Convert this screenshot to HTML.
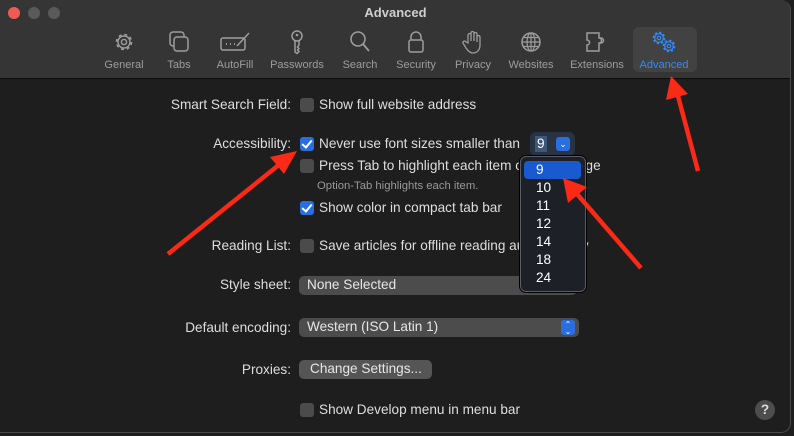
<!DOCTYPE html>
<html><head><meta charset="utf-8"><style>
*{margin:0;padding:0;box-sizing:border-box}
body{width:794px;height:436px;background:#1e1e1e;font-family:"Liberation Sans",sans-serif;color:#dedede;font-size:13.6px;position:relative;overflow:hidden}
.win{position:absolute;left:0;top:0;width:791px;height:433px;background:#1e1e1e;border:1px solid #4a4a4a;border-top:none;border-left:none;border-radius:0 10px 10px 0;overflow:hidden}
.tb{position:absolute;left:0;top:0;width:100%;height:79px;background:#353535;border-bottom:1px solid #0c0c0c}
.dot{position:absolute;top:7px;width:12px;height:12px;border-radius:50%;background:#5a5a5a}
.title{position:absolute;top:5px;left:0;width:791px;text-align:center;font-weight:bold;color:#cfcfcf;font-size:13px}
.it{position:absolute;top:29px;width:70px;margin-left:-35px;text-align:center;color:#9d9d9d;font-size:11px}
.it svg{display:block;margin:0 auto 4px;height:26px}
.sel{position:absolute;left:633px;top:27px;width:64px;height:45px;background:#424242;border-radius:6px}
.a{position:absolute;white-space:nowrap}
.lbl{position:absolute;right:499px;white-space:nowrap}
.cb{position:absolute;left:300px;width:14px;height:14px;border-radius:3px;background:#4b4b4b}
.cb.on{background:#2a6ee3}
.cb.on:after{content:"";position:absolute;left:4px;top:1px;width:4px;height:8px;border:solid #fff;border-width:0 2px 2px 0;transform:rotate(40deg)}
.pop{position:absolute;left:299px;height:19px;background:#4c4c4c;border-radius:5px;padding:1px 8px;color:#e6e6e6}
</style></head><body>
<div class="win">
<div class="tb">
<div class="dot" style="left:8px;background:#ee5b55"></div><div class="dot" style="left:28px"></div><div class="dot" style="left:48px"></div>
<div class="title">Advanced</div>
<div class="sel"></div>
<div class="it" style="left:124px"><svg viewBox="0 0 26 26" width="26"><circle cx="13" cy="13" r="7.5" fill="none" stroke="#9d9d9d" stroke-width="1.6" stroke-dasharray="3 2.9"/><circle cx="13" cy="13" r="6" fill="none" stroke="#9d9d9d" stroke-width="1.4"/><circle cx="13" cy="13" r="2.6" fill="none" stroke="#9d9d9d" stroke-width="1.4"/></svg>General</div>
<div class="it" style="left:179px"><svg viewBox="0 0 26 26" width="26"><rect x="4" y="3" width="14" height="14" rx="3" fill="none" stroke="#9d9d9d" stroke-width="1.5"/><rect x="8" y="8" width="14" height="14" rx="3" fill="#353535" stroke="#9d9d9d" stroke-width="1.5"/></svg>Tabs</div>
<div class="it" style="left:235px"><svg viewBox="0 0 32 26" width="32"><rect x="2" y="9" width="24" height="12" rx="2" fill="none" stroke="#9d9d9d" stroke-width="1.5"/><path d="M7 15h1M11 15h1M15 15h1" stroke="#9d9d9d" stroke-width="2"/><path d="M18 17L30 4" stroke="#9d9d9d" stroke-width="1.5"/></svg>AutoFill</div>
<div class="it" style="left:297px"><svg viewBox="0 0 26 26" width="26"><circle cx="13" cy="7" r="5" fill="none" stroke="#9d9d9d" stroke-width="1.5"/><circle cx="13" cy="6" r="1.3" fill="#9d9d9d"/><path d="M11 12v11l2 1.5 2-2-1.5-1.5 1.5-1.5-1.5-1.5L15 16v-4" fill="none" stroke="#9d9d9d" stroke-width="1.5"/></svg>Passwords</div>
<div class="it" style="left:360px"><svg viewBox="0 0 26 26" width="26"><circle cx="11" cy="10" r="7" fill="none" stroke="#9d9d9d" stroke-width="1.6"/><path d="M16 15l6 7" stroke="#9d9d9d" stroke-width="1.8"/></svg>Search</div>
<div class="it" style="left:416px"><svg viewBox="0 0 26 26" width="26"><path d="M8 11V8a5 5 0 0 1 10 0v3" fill="none" stroke="#9d9d9d" stroke-width="1.5"/><rect x="6" y="11" width="14" height="12" rx="2" fill="none" stroke="#9d9d9d" stroke-width="1.5"/></svg>Security</div>
<div class="it" style="left:473px"><svg viewBox="0 0 26 26" width="26"><path d="M8 14V6a1.5 1.5 0 0 1 3 0v6V4a1.5 1.5 0 0 1 3 0v8V5a1.5 1.5 0 0 1 3 0v8V8a1.5 1.5 0 0 1 3 0v8c0 5-3 8-7 8-3 0-5-2-7-5l-3-5a1.5 1.5 0 0 1 2.5-1.5z" fill="none" stroke="#9d9d9d" stroke-width="1.3"/></svg>Privacy</div>
<div class="it" style="left:531px"><svg viewBox="0 0 26 26" width="26"><circle cx="13" cy="13" r="9" fill="none" stroke="#9d9d9d" stroke-width="1.5"/><ellipse cx="13" cy="13" rx="4" ry="9" fill="none" stroke="#9d9d9d" stroke-width="1.2"/><path d="M4 13h18M13 4v18M5.5 8.5h15M5.5 17.5h15" stroke="#9d9d9d" stroke-width="1.2"/></svg>Websites</div>
<div class="it" style="left:597px"><svg viewBox="0 0 26 26" width="26"><path d="M3 4h12v5a2.5 2.5 0 0 1 0 5v-0 8H3v-6a2.5 2.5 0 0 0 0-5z M15 9h2a2.5 2.5 0 0 1 0 5h-2" fill="none" stroke="#9d9d9d" stroke-width="1.5"/></svg>Extensions</div>
<div class="it" style="left:664px;color:#2d8cff"><svg viewBox="0 0 28 26" width="28"><circle cx="9" cy="9" r="5.5" fill="none" stroke="#2d8cff" stroke-width="1.6" stroke-dasharray="2.3 2"/><circle cx="9" cy="9" r="4.3" fill="none" stroke="#2d8cff" stroke-width="1.2"/><circle cx="9" cy="9" r="1.7" fill="none" stroke="#2d8cff" stroke-width="1.2"/><circle cx="19" cy="17" r="5.5" fill="none" stroke="#2d8cff" stroke-width="1.6" stroke-dasharray="2.3 2"/><circle cx="19" cy="17" r="4.3" fill="none" stroke="#2d8cff" stroke-width="1.2"/><circle cx="19" cy="17" r="1.7" fill="none" stroke="#2d8cff" stroke-width="1.2"/></svg>Advanced</div>
</div>

<div class="lbl" style="top:97px">Smart Search Field:</div>
<div class="cb" style="top:98px"></div><div class="a" style="left:319px;top:97px">Show full website address</div>

<div class="lbl" style="top:136px">Accessibility:</div>
<div class="cb on" style="top:137px"></div><div class="a" style="left:319px;top:136px">Never use font sizes smaller than</div>
<div class="a" style="left:532px;top:134px;width:41px;height:20px;border-radius:4px;background:#2a3440;box-shadow:0 0 0 2px #23344a"></div>
<div class="a" style="left:535px;top:136px;background:#3e5677;color:#fff;padding:0 2px;line-height:16px">9</div>
<div class="a" style="left:556px;top:137px;width:14px;height:14px;border-radius:3px;background:#2a6ee3;color:#fff;font-size:9px;text-align:center;line-height:14px">&#8964;</div>
<div class="cb" style="top:159px"></div><div class="a" style="left:319px;top:158px">Press Tab to highlight each item on a webpage</div>
<div class="a" style="left:317px;top:180px;font-size:11.3px;color:#999">Option-Tab highlights each item.</div>
<div class="cb on" style="top:201px"></div><div class="a" style="left:319px;top:200px">Show color in compact tab bar</div>

<div class="lbl" style="top:238px">Reading List:</div>
<div class="cb" style="top:239px"></div><div class="a" style="left:319px;top:238px">Save articles for offline reading automatically</div>

<div class="lbl" style="top:277px">Style sheet:</div>
<div class="pop" style="top:276px;width:278px">None Selected</div>

<div class="lbl" style="top:320px">Default encoding:</div>
<div class="pop" style="top:318px;width:280px">Western (ISO Latin 1)</div>
<div class="a" style="left:561px;top:320px;width:14px;height:15px;border-radius:3px;background:#2a6ee3;color:#fff;font-size:8px;text-align:center;line-height:7px;padding-top:1px">&#8963;<br>&#8964;</div>

<div class="lbl" style="top:362px">Proxies:</div>
<div class="pop" style="top:360px;width:133px;padding-left:11px;background:#555">Change Settings...</div>

<div class="cb" style="top:403px"></div><div class="a" style="left:319px;top:402px">Show Develop menu in menu bar</div>
<div class="a" style="left:755px;top:400px;width:20px;height:20px;border-radius:50%;background:#4d4d4d;color:#ddd;text-align:center;line-height:20px;font-weight:bold">?</div>

<div class="a" style="left:520px;top:156px;width:66px;height:136px;background:#1d2127;border:1px solid #5a5e64;border-radius:6px;box-shadow:0 0 0 1px #000"></div>
<div class="a" style="left:524px;top:161px;width:57px;height:18px;background:#1a5ad0;border-radius:4px"></div>
<div class="a" style="left:536px;top:161px;line-height:18px;color:#fff">9<br>10<br>11<br>12<br>14<br>18<br>24</div>

<svg class="a" style="left:0;top:0" width="794" height="436">
<g stroke="#fa2a16" stroke-width="4.5" fill="#fa2a16">
<line x1="698" y1="171" x2="678" y2="96"/><polygon points="671,76 666,100 688,94" stroke="none"/>
<line x1="168" y1="254" x2="280" y2="164"/><polygon points="297,151 270,157 284,174" stroke="none"/>
<line x1="641" y1="268" x2="577" y2="194"/><polygon points="563,178 568,203 587,187" stroke="none"/>
</g></svg>
</div>
</body></html>
